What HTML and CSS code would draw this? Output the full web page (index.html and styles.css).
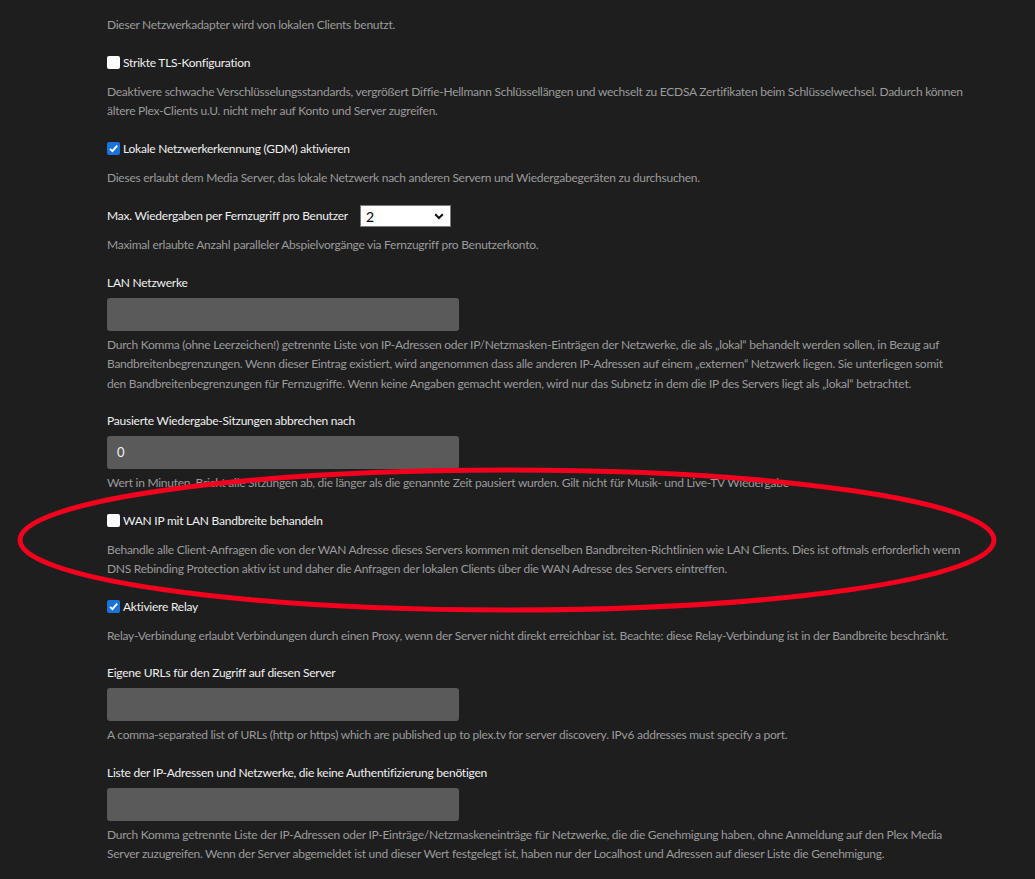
FILE: index.html
```html
<!DOCTYPE html>
<html lang="de">
<head>
<meta charset="utf-8">
<title>Netzwerk-Einstellungen</title>
<link rel="stylesheet" href="styles.css">
</head>
<body>
<main class="settings">
  <div class="setting">
    <p class="desc first">Dieser Netzwerkadapter wird von lokalen Clients benutzt.</p>
  </div>

  <div class="setting">
    <label class="label check"><span class="cb"></span>Strikte TLS-Konfiguration</label>
    <p class="desc">Deaktivere schwache Verschlüsselungsstandards, vergrößert Diffie-Hellmann Schlüssellängen und wechselt zu ECDSA Zertifikaten beim Schlüsselwechsel. Dadurch können ältere Plex-Clients u.U. nicht mehr auf Konto und Server zugreifen.</p>
  </div>

  <div class="setting">
    <label class="label check"><span class="cb on"><svg viewBox="0 0 13 13" width="13" height="13"><path d="M3 6.8 L5.4 9.2 L10.2 3.6" fill="none" stroke="#fff" stroke-width="1.8"/></svg></span>Lokale Netzwerkerkennung (GDM) aktivieren</label>
    <p class="desc">Dieses erlaubt dem Media Server, das lokale Netzwerk nach anderen Servern und Wiedergabegeräten zu durchsuchen.</p>
  </div>

  <div class="setting">
    <div class="select-row">
      <label class="label">Max. Wiedergaben per Fernzugriff pro Benutzer</label>
      <div class="select"><span>2</span><svg viewBox="0 0 10 7" width="10" height="7"><path d="M1.2 1.2 L5 5 L8.8 1.2" fill="none" stroke="#111" stroke-width="2"/></svg></div>
    </div>
    <p class="desc tight">Maximal erlaubte Anzahl paralleler Abspielvorgänge via Fernzugriff pro Benutzerkonto.</p>
  </div>

  <div class="setting field">
    <label class="label">LAN Netzwerke</label>
    <div class="input"></div>
    <p class="desc">Durch Komma (ohne Leerzeichen!) getrennte Liste von IP-Adressen oder IP/Netzmasken-Einträgen der Netzwerke, die als „lokal“ behandelt werden sollen, in Bezug auf Bandbreitenbegrenzungen. Wenn dieser Eintrag existiert, wird angenommen dass alle anderen IP-Adressen auf einem „externen“ Netzwerk liegen. Sie unterliegen somit den Bandbreitenbegrenzungen für Fernzugriffe. Wenn keine Angaben gemacht werden, wird nur das Subnetz in dem die IP des Servers liegt als „lokal“ betrachtet.</p>
  </div>

  <div class="setting field">
    <label class="label">Pausierte Wiedergabe-Sitzungen abbrechen nach</label>
    <div class="input">0</div>
    <p class="desc">Wert in Minuten. Bricht alle Sitzungen ab, die länger als die genannte Zeit pausiert wurden. Gilt nicht für Musik- und Live-TV Wiedergabe</p>
  </div>

  <div class="setting">
    <label class="label check"><span class="cb"></span>WAN IP mit LAN Bandbreite behandeln</label>
    <p class="desc">Behandle alle Client-Anfragen die von der WAN Adresse dieses Servers kommen mit denselben Bandbreiten-Richtlinien wie LAN Clients. Dies ist oftmals erforderlich wenn DNS Rebinding Protection aktiv ist und daher die Anfragen der lokalen Clients über die WAN Adresse des Servers eintreffen.</p>
  </div>

  <div class="setting">
    <label class="label check"><span class="cb on"><svg viewBox="0 0 13 13" width="13" height="13"><path d="M3 6.8 L5.4 9.2 L10.2 3.6" fill="none" stroke="#fff" stroke-width="1.8"/></svg></span>Aktiviere Relay</label>
    <p class="desc">Relay-Verbindung erlaubt Verbindungen durch einen Proxy, wenn der Server nicht direkt erreichbar ist. Beachte: diese Relay-Verbindung ist in der Bandbreite beschränkt.</p>
  </div>

  <div class="setting field">
    <label class="label">Eigene URLs für den Zugriff auf diesen Server</label>
    <div class="input"></div>
    <p class="desc">A comma-separated list of URLs (http or https) which are published up to plex.tv for server discovery. IPv6 addresses must specify a port.</p>
  </div>

  <div class="setting field">
    <label class="label">Liste der IP-Adressen und Netzwerke, die keine Authentifizierung benötigen</label>
    <div class="input"></div>
    <p class="desc">Durch Komma getrennte Liste der IP-Adressen oder IP-Einträge/Netzmaskeneinträge für Netzwerke, die die Genehmigung haben, ohne Anmeldung auf den Plex Media Server zuzugreifen. Wenn der Server abgemeldet ist und dieser Wert festgelegt ist, haben nur der Localhost und Adressen auf dieser Liste die Genehmigung.</p>
  </div>
</main>

<svg class="annotation" viewBox="0 0 1035 879" width="1035" height="879">
  <ellipse cx="507" cy="540" rx="487" ry="70" fill="none" stroke="#f4001f" stroke-width="5"/>
</svg>
</body>
</html>
```

FILE: styles.css
```css
html, body {
  margin: 0;
  padding: 0;
}

body {
  background: #1e1e1e;
  font-family: "Lato", "Open Sans", "Liberation Sans", sans-serif;
  position: relative;
  min-height: 879px;
  overflow: hidden;
}

.settings {
  padding: 15px 0 0 107px;
  width: 857px;
}

.setting {
  margin-bottom: 18px;
}

.label {
  display: flex;
  align-items: center;
  height: 20px;
  line-height: 20px;
  font-size: 12px;
  letter-spacing: -0.24px;
  color: #f0f0f0;
  white-space: nowrap;
}

.check {
  gap: 3px;
}

.cb {
  width: 13px;
  height: 13px;
  border-radius: 2px;
  background: #fff;
  flex: none;
  display: block;
}

.cb.on {
  background: #1a73d9;
}

.cb svg {
  display: block;
}

.desc {
  margin: 9px 0 0;
  font-size: 12px;
  letter-spacing: -0.26px;
  line-height: 19.5px;
  color: #9b9b9b;
}

.desc.first {
  margin-top: 0;
}

.select-row {
  display: flex;
  align-items: center;
  gap: 12px;
  height: 22px;
}

.select {
  display: flex;
  align-items: center;
  justify-content: space-between;
  padding: 0 6px 0 5px;
  box-sizing: border-box;
  width: 91px;
  height: 22px;
  border: 1px solid #7a7a7a;
  background: #fff;
  font-size: 14px;
  color: #000;
}

.desc.tight {
  margin-top: 8px;
}

.field .input {
  margin-top: 5px;
}

.field .desc {
  margin-top: 4px;
}

.input {
  width: 352px;
  height: 33px;
  background: #5a5a5a;
  border-radius: 3px;
  box-sizing: border-box;
  padding: 0 10px;
  line-height: 33px;
  font-size: 13px;
  color: #f2f2f2;
}

.annotation {
  position: absolute;
  left: 0;
  top: 0;
  pointer-events: none;
}
```
